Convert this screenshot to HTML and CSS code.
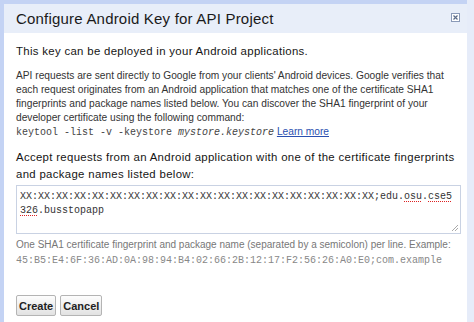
FILE: index.html
```html
<!DOCTYPE html>
<html lang="en">
<head>
  <meta charset="UTF-8" />
  <title>Configure Android Key for API Project</title>
  <link rel="stylesheet" href="styles.css">
</head>
<body>
  <div class="dialog">
    <div class="title-bar">
      <div class="title">Configure Android Key for API Project</div>
      <div class="close">
        <svg width="9" height="9" viewBox="0 0 9 9">
          <rect x="0.5" y="0.5" width="8" height="8" fill="#fff" stroke="#8a9ab8" />
          <path d="M2.5 2.5 L6.5 6.5 M6.5 2.5 L2.5 6.5" stroke="#5b6b88" stroke-width="1.2" />
        </svg>
      </div>
    </div>

    <div class="content">
      <p class="lead">This key can be deployed in your Android applications.</p>

      <p class="info">
        API requests are sent directly to Google from your clients' Android devices. Google verifies that
        each request originates from an Android application that matches one of the certificate SHA1
        fingerprints and package names listed below. You can discover the SHA1 fingerprint of your
        developer certificate using the following command:<br />
        <code>keytool -list -v -keystore <i>mystore.keystore</i></code> <a href="#">Learn more</a>
      </p>

      <p class="lead accept">Accept requests from an Android application with one of the certificate fingerprints and package names listed below:</p>

      <div class="key-box">XX:XX:XX:XX:XX:XX:XX:XX:XX:XX:XX:XX:XX:XX:XX:XX:XX:XX:XX:XX;edu.<span class="typo">osu</span>.<span class="typo">cse5</span><br /><span class="typo">326</span>.busstopapp<svg class="grip" width="8" height="8" viewBox="0 0 8 8"><path d="M7 1 L1 7 M7 4 L4 7" stroke="#aaa" stroke-width="1" /></svg></div>

      <p class="hint">One SHA1 certificate fingerprint and package name (separated by a semicolon) per line. Example:<br />
        <code>45:B5:E4:6F:36:AD:0A:98:94:B4:02:66:2B:12:17:F2:56:26:A0:E0;com.example</code>
      </p>

      <div class="buttons">
        <button class="btn">Create</button>
        <button class="btn">Cancel</button>
      </div>
    </div>
  </div>
</body>
</html>
```

FILE: styles.css
```css
body {
  margin: 0;
  background: #e6ecf9;
  font-family: "Liberation Sans", Arial, sans-serif;
  color: #222;
}

.dialog {
  height: 318px;
  margin-right: 7px;
  border-top: 4px solid #c4d3f4;
  border-left: 4px solid #c4d3f4;
  background: #fff;
}

.title-bar {
  display: flex;
  align-items: center;
  justify-content: space-between;
  height: 29px;
  padding: 0 7px 0 12px;
  background: #e8eef9;
}

.title {
  font-size: 15px;
  color: #1a1a1a;
  letter-spacing: 0.2px;
}

.close {
  display: flex;
  margin-top: -2px;
}

.content {
  padding: 10px 6px 0 12px;
}

p {
  margin: 0;
}

.lead {
  font-size: 11.4px;
  letter-spacing: 0.32px;
  line-height: 17px;
  color: #151515;
}

.info {
  margin-top: 9px;
  font-size: 10.2px;
  line-height: 14px;
  color: #333;
}

code {
  font-family: "Liberation Mono", "Courier New", monospace;
  font-size: 10px;
  color: #444;
}

a {
  color: #2a4fb0;
}

.accept {
  margin-top: 9px;
}

.key-box {
  position: relative;
  margin-top: 2px;
  height: 39px;
  padding: 4px 3px;
  border: 1px solid #c9d2e3;
  font-family: "Liberation Mono", "Courier New", monospace;
  font-size: 10px;
  line-height: 14px;
  color: #333;
}

.typo {
  text-decoration: underline dotted #d22;
  text-underline-offset: 2px;
}

.grip {
  position: absolute;
  right: 1px;
  bottom: 1px;
}

.hint {
  margin-top: 3px;
  font-size: 10px;
  line-height: 15px;
  color: #777;
}

.hint code {
  color: #888;
}

.buttons {
  display: flex;
  gap: 4px;
  margin-top: 27px;
}

.btn {
  height: 21px;
  padding: 0 2px;
  border: 1px solid #b4b4b4;
  border-radius: 2px;
  background: linear-gradient(#fdfdfd, #e2e2e2);
  font-family: "Liberation Sans", Arial, sans-serif;
  font-size: 11px;
  font-weight: bold;
  color: #222;
}
```
